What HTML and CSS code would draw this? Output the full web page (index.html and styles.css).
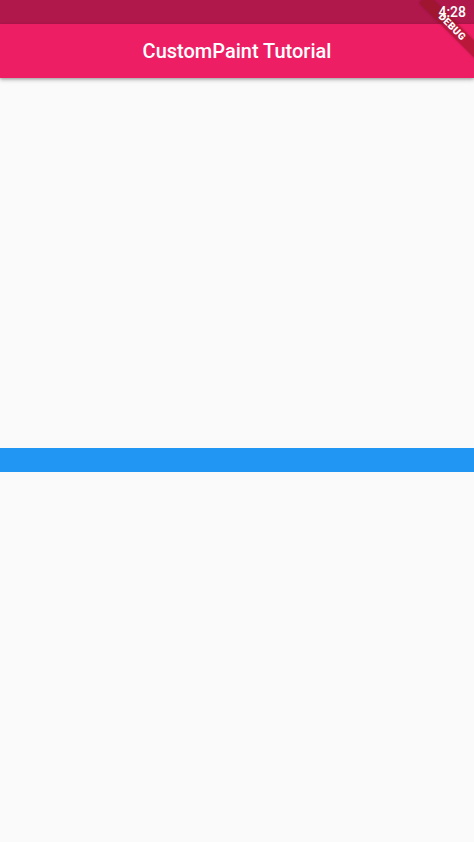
FILE: index.html
```html
<!DOCTYPE html>
<html>
<head>
<meta charset="utf-8">
<link rel="stylesheet" href="styles.css">
</head>
<body>
<div class="screen">
  <div class="status-bar"><span class="time">4:28</span></div>
  <header class="app-bar"><h1 class="title">CustomPaint Tutorial</h1></header>
  <main class="content">
    <div class="line"></div>
  </main>
  <div class="debug-banner"><span>DEBUG</span></div>
</div>
</body>
</html>
```

FILE: styles.css
```css
html, body {
  margin: 0;
  padding: 0;
}
body {
  font-family: Roboto, "Noto Sans", sans-serif;
  background: #fafafa;
}
.screen {
  position: relative;
  width: 474px;
  height: 842px;
  display: flex;
  flex-direction: column;
  overflow: hidden;
  background: #fafafa;
}
.status-bar {
  height: 24px;
  flex: none;
  background: #b0174b;
  display: flex;
  justify-content: flex-end;
  align-items: center;
  padding-right: 8px;
  box-sizing: border-box;
}
.time {
  color: #fff;
  font-size: 14px;
  font-weight: 500;
  line-height: 1;
  position: relative;
  z-index: 6;
}
.app-bar {
  height: 54px;
  flex: none;
  background: #ed1e64;
  display: flex;
  align-items: center;
  justify-content: center;
  box-shadow: 0 2px 4px rgba(0,0,0,0.25), 0 1px 2px rgba(0,0,0,0.15);
  position: relative;
  z-index: 1;
}
.title {
  margin: 0;
  color: #fff;
  font-size: 20px;
  font-weight: 500;
  line-height: 1;
}
.content {
  flex: 1;
  display: flex;
  align-items: center;
}
.line {
  width: 100%;
  height: 24px;
  background: #2196f3;
}
.debug-banner {
  position: absolute;
  left: 412px;
  top: 21px;
  width: 80px;
  height: 12px;
  background: rgba(150, 20, 30, 0.6);
  transform: rotate(45deg);
  display: flex;
  align-items: center;
  justify-content: center;
  z-index: 5;
  box-shadow: 0 0 3px rgba(0,0,0,0.2);
}
.debug-banner span {
  color: #fff;
  font-size: 10px;
  font-weight: 900;
  line-height: 1;
  letter-spacing: 0.3px;
}
```
